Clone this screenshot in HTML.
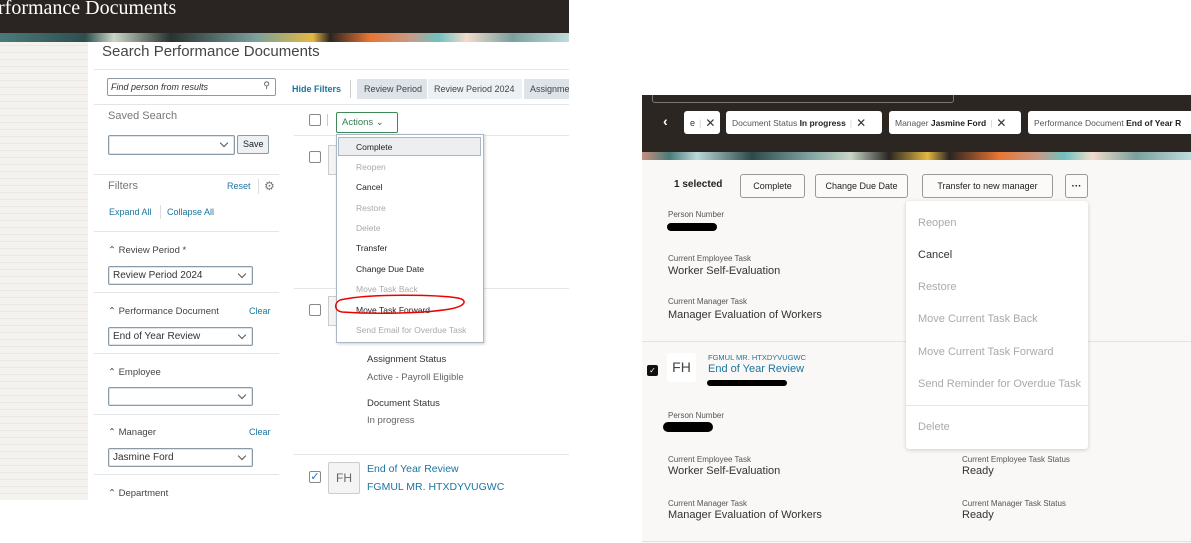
<!DOCTYPE html>
<html><head><meta charset="utf-8"><style>
*{margin:0;padding:0;box-sizing:border-box}
body{width:1191px;height:543px;background:#fff;position:relative;overflow:hidden;font-family:"Liberation Sans",sans-serif}
.a{position:absolute;white-space:nowrap}
.sel{position:absolute;border:1px solid #8a9aa6;border-radius:2px;background:#fff;height:19px;font-size:10px;color:#333;padding:3px 4px;box-shadow:inset 0 0 0 1px #dde4ea}
.sel:after{content:"";position:absolute;right:7px;top:4px;width:5px;height:5px;border-right:1px solid #555;border-bottom:1px solid #555;transform:rotate(45deg)}
.hr{position:absolute;height:1px;background:#e3e6e8}
.lk{color:#1b75a0}
.cb{position:absolute;width:12px;height:12px;border:1px solid #888;border-radius:2px;background:#fff}
.mi{position:absolute;left:356px;font-size:8.5px;color:#222}
.dis{color:#aaa}
.rm{position:absolute;left:918px;font-size:11px;color:#aaa}
.lbl{font-size:8px;color:#555}
.val{font-size:11px;color:#333}
.chip{position:absolute;top:111px;height:23px;background:#fff;border-radius:3px;font-size:9px;color:#555;padding:0 6px;display:flex;align-items:center;white-space:nowrap;overflow:hidden}
.chip i{font-style:normal;color:#ccc;margin:0 4px}
.chip s{text-decoration:none;font-size:12px;color:#333}
.btn{position:absolute;top:174px;height:24px;border:1px solid #999;border-radius:3px;background:#fbfaf9;font-size:9px;color:#222;white-space:nowrap;display:flex;align-items:center;justify-content:center}
</style></head><body>
<!-- LEFT -->
<div class="a" style="left:0;top:0;width:569px;height:33px;background:#2a2522"></div>
<div class="a" style="left:-2px;top:-3px;font-family:'Liberation Serif',serif;font-size:20px;color:#fff">rformance Documents</div>
<div class="a" style="left:0;top:33px;width:569px;height:9px;background:linear-gradient(90deg,#4a7b79 0,#2f4e4d 15%,#c9d6c7 20%,#28322f 30%,#7aa09d 45%,#e5b842 55%,#2a2522 58%,#e87533 65%,#c89a85 72%,#70c1bf 77%,#f1dbcc 82%,#7aa09d 90%,#bfdcdc 100%)"></div>
<div class="a" style="left:0;top:42px;width:88px;height:458px;background:repeating-linear-gradient(0deg,#f4f2ef 0 6px,#ebe8e4 6px 7px)"></div>
<div class="a" style="left:102px;top:43px;font-size:15px;color:#444">Search Performance Documents</div>
<div class="hr" style="left:94px;top:69px;width:475px"></div>
<div class="a" style="left:107px;top:78px;width:169px;height:18px;border:1px solid #8a9aa6;border-radius:2px;font-size:9px;font-style:italic;color:#333;padding:3px 3px">Find person from results<span style="position:absolute;right:5px;top:1px;font-style:normal;color:#555">&#9906;</span></div>
<div class="a" style="left:292px;top:84px;font-size:9px;font-weight:bold" ><span class="lk">Hide Filters</span></div>
<div class="a" style="left:350px;top:80px;width:1px;height:18px;background:#ccc"></div>
<div class="a" style="left:357px;top:79px;width:70px;height:20px;background:#dde3e8;font-size:9px;color:#444;padding:5px 7px">Review Period</div>
<div class="a" style="left:428px;top:79px;width:94px;height:20px;background:#eef1f3;font-size:9px;color:#444;padding:5px 6px">Review Period 2024</div>
<div class="a" style="left:524px;top:79px;width:45px;height:20px;background:#dde3e8;font-size:9px;color:#444;padding:5px 6px;overflow:hidden">Assignme</div>
<div class="hr" style="left:94px;top:104px;width:475px"></div>
<div class="a" style="left:108px;top:110px;font-size:11px;color:#777">Saved Search</div>
<div class="sel" style="left:108px;top:135px;width:127px;height:20px"></div>
<div class="a" style="left:237px;top:135px;width:32px;height:19px;background:#eef1f3;border:1px solid #8a9aa6;border-radius:2px;font-size:9px;color:#222;padding:3px 5px">Save</div>
<div class="hr" style="left:94px;top:174px;width:185px"></div>
<div class="a" style="left:108px;top:180px;font-size:11px;color:#777">Filters</div>
<div class="a lk" style="left:227px;top:181px;font-size:9px">Reset</div>
<div class="a" style="left:258px;top:179px;width:1px;height:15px;background:#ddd"></div>
<div class="a" style="left:264px;top:179px;font-size:12px;color:#777">&#9881;</div>
<div class="a lk" style="left:109px;top:207px;font-size:9px">Expand All</div>
<div class="a" style="left:160px;top:205px;width:1px;height:14px;background:#ddd"></div>
<div class="a lk" style="left:167px;top:207px;font-size:9px">Collapse All</div>
<div class="hr" style="left:94px;top:231px;width:185px"></div>
<div class="a" style="left:108px;top:245px;font-size:9.5px;color:#444">&#8963; Review Period *</div>
<div class="sel" style="left:108px;top:266px;width:145px">Review Period 2024</div>
<div class="hr" style="left:94px;top:292px;width:185px"></div>
<div class="a" style="left:108px;top:306px;font-size:9.5px;color:#444">&#8963; Performance Document</div>
<div class="a lk" style="left:249px;top:306px;font-size:9px">Clear</div>
<div class="sel" style="left:108px;top:327px;width:145px">End of Year Review</div>
<div class="hr" style="left:94px;top:353px;width:185px"></div>
<div class="a" style="left:108px;top:367px;font-size:9.5px;color:#444">&#8963; Employee</div>
<div class="sel" style="left:108px;top:387px;width:145px"></div>
<div class="hr" style="left:94px;top:414px;width:185px"></div>
<div class="a" style="left:108px;top:427px;font-size:9.5px;color:#444">&#8963; Manager</div>
<div class="a lk" style="left:249px;top:427px;font-size:9px">Clear</div>
<div class="sel" style="left:108px;top:448px;width:145px">Jasmine Ford</div>
<div class="hr" style="left:94px;top:474px;width:185px"></div>
<div class="a" style="left:108px;top:488px;font-size:9.5px;color:#444">&#8963; Department</div>
<div class="cb" style="left:309px;top:114px"></div>
<div class="a" style="left:327px;top:114px;width:1px;height:12px;background:#ccc"></div>
<div class="a" style="left:336px;top:112px;width:62px;height:21px;border:1px solid #3d8a57;border-radius:2px;font-size:9.5px;color:#2f7d4a;padding:4px 5px">Actions &#8964;</div>
<div class="hr" style="left:294px;top:135px;width:275px"></div>
<div class="cb" style="left:309px;top:151px"></div>
<div class="a" style="left:328px;top:145px;width:10px;height:30px;border:1px solid #ccc;background:#f4f4f4"></div>
<div class="hr" style="left:294px;top:288px;width:275px"></div>
<div class="cb" style="left:309px;top:304px"></div>
<div class="a" style="left:328px;top:296px;width:10px;height:30px;border:1px solid #ccc;background:#f4f4f4"></div>
<div class="a" style="left:336px;top:134px;width:148px;height:209px;background:#fff;border:1px solid #a9b8c4;box-shadow:1px 1px 3px rgba(0,0,0,.2)"></div>
<div class="a" style="left:338px;top:137px;width:143px;height:19px;background:#eceef0;border:1px solid #a9b8c4"></div>
<div class="mi" style="top:142px">Complete</div>
<div class="mi dis" style="top:162px">Reopen</div>
<div class="mi" style="top:182px">Cancel</div>
<div class="mi dis" style="top:203px">Restore</div>
<div class="mi dis" style="top:223px">Delete</div>
<div class="mi" style="top:243px">Transfer</div>
<div class="mi" style="top:264px">Change Due Date</div>
<div class="mi dis" style="top:284px">Move Task Back</div>
<div class="mi" style="top:305px">Move Task Forward</div>
<div class="mi dis" style="top:325px">Send Email for Overdue Task</div>
<svg class="a" style="left:330px;top:294px" width="140" height="30"><path d="M10 6 C40 -1 110 1 128 4 C138 6 136 12 120 15 C90 20 40 20 12 18 C4 17 4 9 10 6" fill="none" stroke="#e00" stroke-width="1.5"/></svg>
<div class="a" style="left:367px;top:354px;font-size:9.5px;color:#333">Assignment Status</div>
<div class="a" style="left:367px;top:372px;font-size:9.5px;color:#666">Active - Payroll Eligible</div>
<div class="a" style="left:367px;top:398px;font-size:9.5px;color:#333">Document Status</div>
<div class="a" style="left:367px;top:415px;font-size:9.5px;color:#666">In progress</div>
<div class="hr" style="left:294px;top:454px;width:275px"></div>
<div class="a" style="left:309px;top:471px;width:12px;height:12px;border:1px solid #888;border-radius:2px;color:#1a6fd1;font-size:11px;line-height:10px;text-align:center">&#10003;</div>
<div class="a" style="left:328px;top:462px;width:32px;height:32px;border:1px solid #ccc;border-radius:2px;background:#f4f4f4;font-size:12px;color:#666;text-align:center;line-height:30px">FH</div>
<div class="a lk" style="left:367px;top:463px;font-size:10.5px">End of Year Review</div>
<div class="a lk" style="left:367px;top:481px;font-size:10.5px">FGMUL MR. HTXDYVUGWC</div>
<div class="a" style="left:0;top:500px;width:569px;height:43px;background:#fff"></div>
<!-- RIGHT -->
<div class="a" style="left:642px;top:95px;width:549px;height:448px;background:#f9f8f6"></div>
<div class="a" style="left:642px;top:95px;width:549px;height:57px;background:#2b2622"></div>
<div class="a" style="left:652px;top:95px;width:302px;height:8px;border:1px solid #777;border-top:none;border-radius:0 0 3px 3px"></div>
<div class="a" style="left:642px;top:152px;width:549px;height:8px;background:linear-gradient(90deg,#c88f7e 0,#4a7b79 5%,#b9d9d7 10%,#2d4a48 20%,#7aa09d 30%,#c9d6c7 38%,#2a2522 45%,#e5b842 52%,#2a2522 56%,#e87533 65%,#c89a85 72%,#70c1bf 77%,#f1dbcc 82%,#7aa09d 90%,#bfdcdc 100%)"></div>
<div class="a" style="left:663px;top:113px;font-size:14px;color:#fff;font-weight:bold">&#8249;</div>
<div class="chip" style="left:684px;width:36px;color:#333">e<i>|</i><s>&#x2715;</s></div>
<div class="chip" style="left:726px;width:156px;font-size:8.5px">Document Status&nbsp;<b style="color:#222">In progress</b><i>|</i><s>&#x2715;</s></div>
<div class="chip" style="left:889px;width:132px;font-size:8.5px">Manager&nbsp;<b style="color:#222">Jasmine Ford</b><i>|</i><s>&#x2715;</s></div>
<div class="chip" style="left:1028px;width:170px;font-size:8.5px">Performance Document&nbsp;<b style="color:#222">End of Year R</b></div>
<div class="a" style="left:674px;top:179px;font-size:10px;font-weight:bold;color:#222">1 selected</div>
<div class="btn" style="left:740px;width:65px">Complete</div>
<div class="btn" style="left:815px;width:93px">Change Due Date</div>
<div class="btn" style="left:922px;width:131px">Transfer to new manager</div>
<div class="btn" style="left:1065px;width:23px;font-weight:bold;font-size:10px">&middot;&middot;&middot;</div>
<div class="a lbl" style="left:668px;top:210px">Person Number</div>
<div class="a" style="left:667px;top:223px;width:50px;height:8px;border-radius:5px;background:#000"></div>
<div class="a lbl" style="left:668px;top:254px">Current Employee Task</div>
<div class="a val" style="left:668px;top:265px">Worker Self-Evaluation</div>
<div class="a lbl" style="left:668px;top:297px">Current Manager Task</div>
<div class="a val" style="left:668px;top:309px">Manager Evaluation of Workers</div>
<div class="hr" style="left:642px;top:341px;width:549px;background:#e5e3df"></div>
<div class="a" style="left:647px;top:365px;width:11px;height:11px;background:#111;border-radius:2px;color:#fff;font-size:8px;text-align:center;line-height:11px">&#10003;</div>
<div class="a" style="left:667px;top:353px;width:29px;height:29px;background:#fff;border-radius:3px;font-size:14px;color:#444;text-align:center;line-height:29px">FH</div>
<div class="a lk" style="left:708px;top:353px;font-size:7.5px">FGMUL MR. HTXDYVUGWC</div>
<div class="a lk" style="left:708px;top:363px;font-size:11px">End of Year Review</div>
<div class="a" style="left:707px;top:380px;width:80px;height:6px;border-radius:4px;background:#000"></div>
<div class="a lbl" style="left:668px;top:411px">Person Number</div>
<div class="a" style="left:663px;top:422px;width:50px;height:10px;border-radius:6px;background:#000"></div>
<div class="a lbl" style="left:668px;top:455px">Current Employee Task</div>
<div class="a val" style="left:668px;top:465px">Worker Self-Evaluation</div>
<div class="a lbl" style="left:962px;top:455px">Current Employee Task Status</div>
<div class="a val" style="left:962px;top:465px">Ready</div>
<div class="a lbl" style="left:668px;top:499px">Current Manager Task</div>
<div class="a val" style="left:668px;top:509px">Manager Evaluation of Workers</div>
<div class="a lbl" style="left:962px;top:499px">Current Manager Task Status</div>
<div class="a val" style="left:962px;top:509px">Ready</div>
<div class="hr" style="left:642px;top:541px;width:549px;background:#e5e3df"></div>
<div class="a" style="left:906px;top:201px;width:182px;height:248px;background:#fff;border-radius:3px;box-shadow:0 1px 4px rgba(0,0,0,.18)"></div>
<div class="rm" style="top:217px">Reopen</div>
<div class="rm" style="top:249px;color:#333">Cancel</div>
<div class="rm" style="top:281px">Restore</div>
<div class="rm" style="top:313px">Move Current Task Back</div>
<div class="rm" style="top:346px">Move Current Task Forward</div>
<div class="rm" style="top:378px">Send Reminder for Overdue Task</div>
<div class="hr" style="left:906px;top:405px;width:182px"></div>
<div class="rm" style="top:421px">Delete</div>
</body></html>
